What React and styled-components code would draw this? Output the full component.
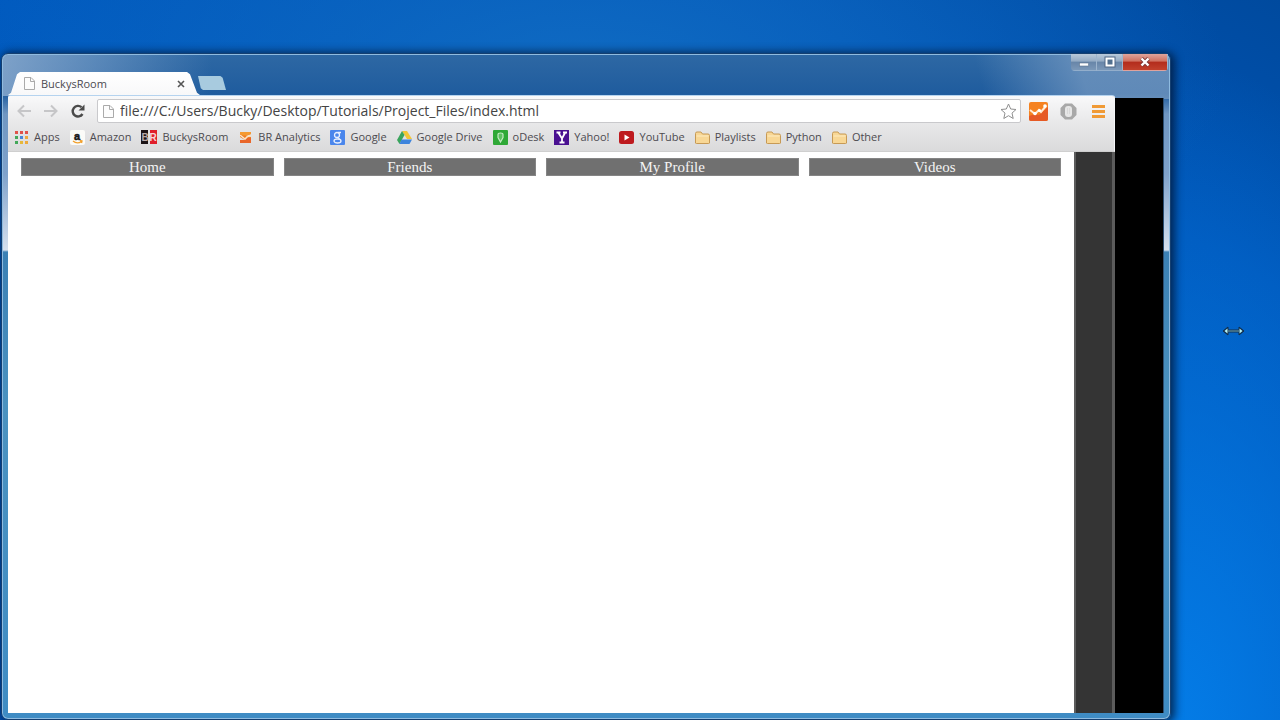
import React from "react";
import styled, { createGlobalStyle } from "styled-components";

const GlobalStyle = createGlobalStyle`
  *, *::before, *::after { box-sizing: border-box; }
  body { margin: 0; font-family: "Open Sans", "Noto Sans", sans-serif; }
  button { font: inherit; border: 0; padding: 0; background: none; }
`;

const Desktop = styled.main`
  position: relative;
  display: flex;
  min-height: 100vh;
  padding: 53px 109px 0 1px;
  overflow: hidden;
  background:
    radial-gradient(ellipse 640px 260px at 46% 10%, rgba(18, 110, 196, 0.85), rgba(18, 110, 196, 0) 100%),
    radial-gradient(ellipse 320px 700px at 92% 105%, #047de8 0%, rgba(4, 125, 232, 0) 100%),
    linear-gradient(to bottom left, #004a9e 0%, #0054b6 20%, #005abf 50%, #0050b4 100%);
`;

const Window = styled.section`
  flex: 1;
  min-width: 0;
  display: flex;
  flex-direction: column;
  padding: 0 6px 6px;
  border: 1px solid #153f70;
  border-radius: 7px;
  box-shadow: inset 0 0 0 1px #8fbbe0, 2px 1px 8px 2px rgba(0, 20, 50, 0.75);
  background:
    linear-gradient(to right, rgba(160, 186, 216, 0.7) 0, rgba(150, 180, 214, 0.45) 90px, rgba(150, 180, 214, 0) 210px) top / 100% 42px no-repeat,
    linear-gradient(75deg, rgba(120, 158, 200, 0) calc(100% - 190px), rgba(130, 162, 198, 0.65) calc(100% - 90px)) top / 100% 45px no-repeat,
    linear-gradient(to bottom, #2e68a4 0, #1f5c9e 40px, #6f96c2 60px, #7fa2cb 120px, #d6e0ee 196px, #3b80b4 198px, #4b92c0 350px, #3f8cc4 100%);
`;

const Caption = styled.header`
  display: flex;
  justify-content: space-between;
  align-items: flex-end;
  height: 41px;
`;

const TabStrip = styled.div`
  display: flex;
  align-items: flex-end;
`;

const Tab = styled.div`
  display: flex;
  align-items: center;
  gap: 4px;
  width: 192px;
  height: 23px;
  padding: 0 15px 0 14px;
  background: linear-gradient(#ffffff, #f8f8f9);
  clip-path: polygon(0 100%, 3px 90%, 9px 10%, 12px 0, 179px 0, 182px 10%, 189px 90%, 192px 100%);
  font-size: 11px;
  line-height: 16px;
  color: #4c4a50;
`;

const TabTitle = styled.span`
  flex: 1;
`;

const CloseTab = styled.button`
  display: flex;
`;

const NewTab = styled.button`
  width: 28px;
  height: 14px;
  margin: 0 0 5px -2px;
  background: #a8cbdf;
  clip-path: polygon(0 0, 80% 0, 88% 12%, 100% 100%, 18% 100%, 10% 88%);
`;

const WindowControls = styled.div`
  display: flex;
  align-self: flex-start;
  margin-right: -4px;
  border-radius: 0 0 4px 4px;
  overflow: hidden;
`;

const ControlButton = styled.button`
  display: flex;
  justify-content: center;
  align-items: center;
  width: ${(p) => (p.$close ? 45 : 26)}px;
  height: 17px;
  border-right: 1px solid #9db4cd;
  border-bottom: 1px solid ${(p) => (p.$close ? "#e0a29c" : "#93aecb")};
  background: ${(p) =>
    p.$close
      ? "linear-gradient(#dfa49c 0, #d0705f 45%, #b32c1c 50%, #c2412c 100%)"
      : "linear-gradient(#b9c9da 0, #94abc4 45%, #6785a8 50%, #7b98b8 100%)"};
`;

const WindowBody = styled.div`
  flex: 1;
  display: flex;
  min-height: 0;
`;

const Browser = styled.div`
  flex: 1;
  min-width: 0;
  display: flex;
  flex-direction: column;
`;

const Unpainted = styled.div`
  width: 49px;
  margin-top: 3px;
  border-right: 1px solid #2c4f74;
  background: #000;
`;

const Toolbar = styled.div`
  border-top: 1px solid #b5d3ef;
  border-right: 1px solid #f4f6f8;
  border-bottom: 1px solid #cfcfcf;
  border-radius: 2px 3px 0 0;
  background: linear-gradient(#f9f9fa 0, #eaeaeb 24px, #dadadb 100%);
`;

const AddressRow = styled.div`
  display: flex;
  align-items: center;
  height: 30px;
  padding: 0 6px 0 8px;
`;

const NavButton = styled.button`
  display: flex;
  width: 27px;
`;

const AddressBox = styled.label`
  flex: 1;
  display: flex;
  align-items: center;
  height: 24px;
  margin-right: 8px;
  padding: 0 3px;
  gap: 4px;
  border: 1px solid #c9c9cc;
  border-radius: 2px;
  background: #fff;
`;

const AddressInput = styled.input`
  flex: 1;
  min-width: 0;
  height: 20px;
  padding: 0;
  border: 0;
  outline: 0;
  background: none;
  font-family: "Open Sans", "Noto Sans", sans-serif;
  font-size: 14px;
  line-height: 20px;
  color: #444;
`;

const StarButton = styled.button`
  display: flex;
`;

const ExtensionBar = styled.div`
  display: flex;
  align-items: center;
  gap: 11px;
`;

const ExtensionButton = styled.button`
  display: flex;
`;

const Bookmarks = styled.nav`
  display: flex;
  gap: 10px;
  height: 25px;
  padding: 2px 6px 0;
`;

const Bookmark = styled.a`
  display: flex;
  align-items: center;
  gap: 5px;
  height: 18px;
  font-size: 11px;
  line-height: 18px;
  color: #4d4b50;
  text-decoration: none;
  white-space: nowrap;
`;

const Viewport = styled.div`
  flex: 1;
  display: flex;
`;

const Page = styled.div`
  flex: 1;
  min-width: 0;
  background: #fff;
`;

const Backdrop = styled.div`
  width: 41px;
  border: solid #5c5c5c;
  border-width: 0 3px 0 2px;
  background: #343434;
`;

const SiteNav = styled.nav`
  display: grid;
  grid-template-columns: repeat(4, 1fr);
  gap: 10px;
  padding: 6px 13px;
`;

const SiteLink = styled.a`
  height: 18px;
  border: 1px solid #858585;
  background: #707070;
  font-family: "Liberation Serif", serif;
  font-size: 15px;
  line-height: 16px;
  text-align: center;
  color: #f4f4f4;
  text-decoration: none;
`;

const ResizeCursor = styled.svg`
  position: absolute;
  top: 325px;
  right: 35px;
`;

const Icon = styled.svg.attrs({ "aria-hidden": true })`
  flex: none;
  display: block;
  width: ${(p) => p.$size || 15}px;
  height: ${(p) => p.$size || 15}px;
`;

const Letter = styled.text`
  font-family: "Liberation Sans", sans-serif;
  font-weight: bold;
  font-size: ${(p) => p.$size}px;
  text-anchor: middle;
`;

const PageIcon = () => (
  <Icon viewBox="0 0 15 15">
    <path d="M2.500 1.500h6.500l3.500 3.500v8.500h-10z" fill="#fcfcfc" stroke="#aaa" />
    <path d="M8.500 1.500v4h4" fill="none" stroke="#aaa" />
  </Icon>
);

const AppsIcon = () => (
  <Icon viewBox="0 0 15 15">
    {["#e0524a", "#e0524a", "#e0524a", "#43a85a", "#4a86d8", "#eea93b", "#43a85a", "#e6b83a", "#eea93b"].map((c, i) => (
      <rect key={i} x={1 + (i % 3) * 5} y={1 + Math.floor(i / 3) * 5} width="3" height="3" fill={c} />
    ))}
  </Icon>
);

const AmazonIcon = () => (
  <Icon viewBox="0 0 15 15">
    <rect width="15" height="15" rx="2" fill="#fbfbf8" />
    <Letter x="7" y="10" $size={11} fill="#1a1a1a" stroke="#1a1a1a" strokeWidth=".5">a</Letter>
    <path d="M3 11q4 3.500 8.500.5M10 10.500l2 .5-.5 2" fill="none" stroke="#f2a02c" strokeWidth="1.300" />
  </Icon>
);

const RoomIcon = () => (
  <Icon viewBox="0 0 16 16" $size={16}>
    <path d="M0 1h7v14H0z" fill="#1c1416" />
    <path d="M9 1h7v14H9z" fill="#e01f2b" />
    <Letter x="4" y="12" $size={10} fill="#b9a9a9">B</Letter>
    <Letter x="12" y="12" $size={10} fill="#f6d5d6">R</Letter>
  </Icon>
);

const BookmarkAnalyticsIcon = () => (
  <Icon viewBox="0 0 15 15">
    <path d="M2 2h11v2L8 6l5 1v6H2v-3h5L2 7z" fill="#ef7d22" />
    <path d="M2 10h5l2-2h4v5H2z" fill="#e9662a" />
    <path d="M2 5l5 4 2.500-2.500 3.500-1" fill="none" stroke="#fbe3c4" strokeWidth="1.600" />
    <path d="M2 2h11v2l-4 1.500H5L2 4z" fill="#f59a30" />
  </Icon>
);

const GoogleIcon = () => (
  <Icon viewBox="0 0 15 15">
    <rect width="15" height="15" rx="1" fill="#4a86ec" />
    <circle cx="7" cy="5" r="2.500" fill="none" stroke="#e8f0fe" strokeWidth="1.300" />
    <ellipse cx="7.500" cy="11" rx="3.500" ry="2" fill="none" stroke="#e8f0fe" strokeWidth="1.300" />
    <path d="M8 2.500h3M8 7.500l1.500 1.500" stroke="#e8f0fe" strokeWidth="1.300" />
  </Icon>
);

const DriveIcon = () => (
  <Icon viewBox="0 0 15 15">
    <path d="M5 1h5l5 8h-5z" fill="#f2c636" />
    <path d="M5 1l2.500 4-5 9L0 10z" fill="#3aa45c" />
    <path d="M4.500 9.500H15L12.500 14h-10z" fill="#3d84dd" />
  </Icon>
);

const DeskIcon = () => (
  <Icon viewBox="0 0 15 15">
    <rect width="15" height="15" rx="1" fill="#2fa836" />
    <path d="M5 4.500Q5 3 7.500 3T10 4.500v3L7.500 12 5 7.500z" fill="#5cc05f" stroke="#c4ebc2" strokeWidth="1.200" />
  </Icon>
);

const YahooIcon = () => (
  <Icon viewBox="0 0 15 15">
    <rect width="15" height="15" fill="#4a1191" />
    <path d="M2.500 2.500h4M9 2.500h4M4.500 3L8 8.500 11 3M8 8v5M5.500 12.500h5" fill="none" stroke="#fff" strokeWidth="1.800" />
  </Icon>
);

const YouTubeIcon = () => (
  <Icon viewBox="0 0 15 15">
    <rect y="1" width="15" height="13" rx="2.500" fill="#be1a1e" />
    <path d="M5.500 4.500l5 3-5 3z" fill="#fff" />
  </Icon>
);

const FolderIcon = () => (
  <Icon viewBox="0 0 15 15">
    <path d="M.5 13V3.500Q.5 2 2 2h4l1.500 2H13q1.500 0 1.500 1.500V13q0 .5-1 .5h-12q-1 0-1-.5z" fill="#f8d795" stroke="#c79a55" />
    <path d="M1.500 6h12" stroke="#fdebc0" />
  </Icon>
);

const bookmarks = [
  ["Apps", AppsIcon],
  ["Amazon", AmazonIcon],
  ["BuckysRoom", RoomIcon],
  ["BR Analytics", BookmarkAnalyticsIcon],
  ["Google", GoogleIcon],
  ["Google Drive", DriveIcon],
  ["oDesk", DeskIcon],
  ["Yahoo!", YahooIcon],
  ["YouTube", YouTubeIcon],
  ["Playlists", FolderIcon],
  ["Python", FolderIcon],
  ["Other", FolderIcon],
];

const siteLinks = ["Home", "Friends", "My Profile", "Videos"];

export default function App() {
  return (
    <Desktop>
      <GlobalStyle />
      <Window aria-label="Browser window">
        <Caption>
          <TabStrip>
            <Tab>
              <PageIcon />
              <TabTitle>BuckysRoom</TabTitle>
              <CloseTab aria-label="Close tab">
                <Icon $size={8} viewBox="0 0 8 8">
                  <path d="M1 1l6 6M7 1L1 7" stroke="#555" strokeWidth="1.600" />
                </Icon>
              </CloseTab>
            </Tab>
            <NewTab aria-label="New tab" />
          </TabStrip>
          <WindowControls>
            <ControlButton aria-label="Minimize">
              <Icon $size={12} viewBox="0 0 12 12">
                <rect x="1.500" y="7" width="9" height="3" fill="#fff" stroke="#5d728c" strokeWidth=".6" />
              </Icon>
            </ControlButton>
            <ControlButton aria-label="Maximize">
              <Icon $size={12} viewBox="0 0 12 12">
                <rect x="2" y="2" width="8" height="8" fill="none" stroke="#4f6785" strokeWidth="3" />
                <rect x="2.500" y="2.500" width="7" height="7" fill="#52708f" stroke="#fff" strokeWidth="2" />
              </Icon>
            </ControlButton>
            <ControlButton $close aria-label="Close">
              <Icon $size={12} viewBox="0 0 12 12">
                <path d="M2.500 2.500l7 7M9.500 2.500l-7 7" stroke="#7e3a38" strokeWidth="4" />
                <path d="M2.500 2.500l7 7M9.500 2.500l-7 7" stroke="#fff" strokeWidth="2.400" />
              </Icon>
            </ControlButton>
          </WindowControls>
        </Caption>
        <WindowBody>
          <Browser>
            <Toolbar>
              <AddressRow>
                <NavButton aria-label="Back">
                  <Icon $size={16} viewBox="0 0 16 16">
                    <path d="M15 8H2.500M8 2.500L2.500 8 8 13.500" fill="none" stroke="#c6c6c8" strokeWidth="2" />
                  </Icon>
                </NavButton>
                <NavButton aria-label="Forward">
                  <Icon $size={16} viewBox="0 0 16 16">
                    <path d="M1 8h12.500M8 2.500L13.500 8 8 13.500" fill="none" stroke="#c6c6c8" strokeWidth="2" />
                  </Icon>
                </NavButton>
                <NavButton aria-label="Reload">
                  <Icon $size={16} viewBox="0 0 16 16">
                    <path d="M12.500 11A5.300 5.300 0 1 1 11.500 4.200" fill="none" stroke="#4a4a4a" strokeWidth="2.400" />
                    <path d="M14.500 1.500v6h-6z" fill="#4a4a4a" />
                  </Icon>
                </NavButton>
                <AddressBox>
                  <PageIcon />
                  <AddressInput
                    aria-label="Address"
                    defaultValue="file:///C:/Users/Bucky/Desktop/Tutorials/Project_Files/index.html"
                  />
                  <StarButton aria-label="Bookmark this page">
                    <Icon $size={17} viewBox="0 0 17 17">
                      <path
                        d="M8.500 1l2.200 5 5.300.5-4 3.600 1.200 5.400-4.700-2.800-4.700 2.800L5 10.100 1 6.500 6.300 6z"
                        fill="#fff"
                        stroke="#8f8f8f"
                      />
                    </Icon>
                  </StarButton>
                </AddressBox>
                <ExtensionBar>
                  <ExtensionButton aria-label="Analytics extension">
                    <Icon $size={19} viewBox="0 0 19 19">
                      <rect width="19" height="19" rx="2" fill="#f58220" />
                      <path d="M0 14l6-2 4 1 9-8v12q0 2-2 2H2q-2 0-2-2z" fill="#e65a25" />
                      <path d="M1 8l5 4 4-4 2 2 5-6" fill="none" stroke="#ffe9d2" strokeWidth="2" />
                      <circle cx="6" cy="11.500" r="1.800" fill="#fff" />
                      <circle cx="10.500" cy="8.500" r="1.600" fill="#fff" />
                      <circle cx="16" cy="4" r="1.800" fill="#fff" />
                    </Icon>
                  </ExtensionButton>
                  <ExtensionButton aria-label="Blocker extension">
                    <Icon $size={19} viewBox="0 0 19 19">
                      <path d="M6 1.500h7l4.500 4.500v7L13 17.500H6L1.500 13V6z" fill="#a8a8a8" />
                      <rect x="6" y="4" width="7" height="11" rx="3" fill="#e6e6e6" />
                      <path d="M8.500 6v6M10.500 6v6" stroke="#d8d8d8" />
                    </Icon>
                  </ExtensionButton>
                  <ExtensionButton aria-label="Menu">
                    <Icon $size={19} viewBox="0 0 19 19">
                      <path d="M3 4.500h13M3 9.500h13M3 14.500h13" stroke="#f09a35" strokeWidth="3" />
                    </Icon>
                  </ExtensionButton>
                </ExtensionBar>
              </AddressRow>
              <Bookmarks aria-label="Bookmarks">
                {bookmarks.map(([label, Glyph]) => (
                  <Bookmark key={label} href="#">
                    <Glyph />
                    {label}
                  </Bookmark>
                ))}
              </Bookmarks>
            </Toolbar>
            <Viewport>
              <Page>
                <SiteNav aria-label="Site">
                  {siteLinks.map((label) => (
                    <SiteLink key={label} href="#">
                      {label}
                    </SiteLink>
                  ))}
                </SiteNav>
              </Page>
              <Backdrop />
            </Viewport>
          </Browser>
          <Unpainted />
        </WindowBody>
      </Window>
      <ResizeCursor width="23" height="12" viewBox="0 0 23 12" aria-hidden="true">
        <path d="M1 6l5-4v3h11V2l5 4-5 4V7H6v3z" fill="#12304f" stroke="#12304f" />
        <path d="M2.500 6l3-2.500v5zM20.500 6l-3-2.500v5z" fill="#b9f5f5" />
        <path d="M6 6h11" stroke="#6fa9bd" />
      </ResizeCursor>
    </Desktop>
  );
}
